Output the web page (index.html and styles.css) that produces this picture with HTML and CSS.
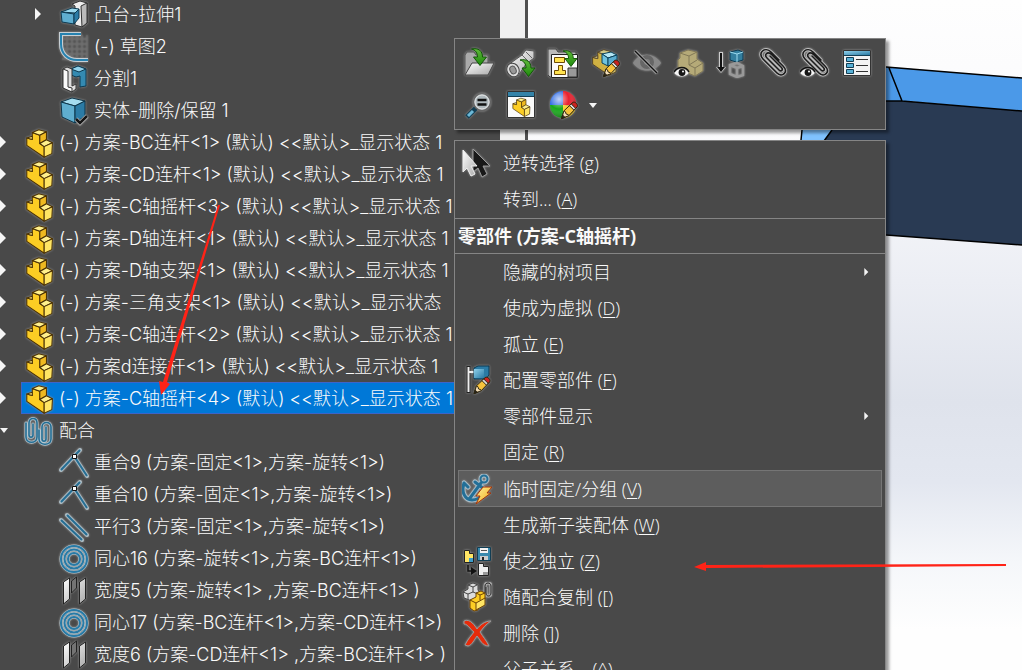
FILE: index.html
```
<!DOCTYPE html>
<html lang="zh-CN">
<head>
  <meta charset="UTF-8" />
  <title>方案</title>
  <meta name="viewport" content="width=device-width, initial-scale=1.0" />
  <link rel="stylesheet" href="styles.css">
</head>

<body>
  <!-- icon sheet -->
  <svg class="sheet" aria-hidden="true">
    <defs>
      <linearGradient id="blue" x1="0" y1="0" x2="1" y2="1">
        <stop offset="0" stop-color="#8fd0ea" /><stop offset="1" stop-color="#2b7ba5" />
      </linearGradient>
      <linearGradient id="grey" x1="0" y1="0" x2="1" y2="1">
        <stop offset="0" stop-color="#ffffff" /><stop offset="1" stop-color="#a8a8a8" />
      </linearGradient>
      <linearGradient id="green" x1="0" y1="0" x2="0" y2="1">
        <stop offset="0" stop-color="#5fb93a" /><stop offset="1" stop-color="#1e8a0c" />
      </linearGradient>
      <linearGradient id="gold" x1="0" y1="0" x2="1" y2="1">
        <stop offset="0" stop-color="#fff09a" /><stop offset="1" stop-color="#efaa14" />
      </linearGradient>
      <radialGradient id="shine" cx="0.35" cy="0.3" r="0.75">
        <stop offset="0" stop-color="#fff" stop-opacity="0.7" /><stop offset="0.5" stop-color="#fff" stop-opacity="0" /><stop offset="1" stop-color="#000" stop-opacity="0.4" />
      </radialGradient>
    </defs>

    <symbol id="right" viewBox="0 0 8 12"><path d="M0 0v12l6-6z" fill="#f5f5f5" /></symbol>
    <symbol id="down" viewBox="0 0 8 12"><path d="M0 4h8l-4 5z" fill="#f5f5f5" /></symbol>

    <symbol id="part" viewBox="1 0 29 29">
      <g stroke="#4b3205" stroke-width="1" stroke-linejoin="round">
        <path d="M9 4.300 16.300 7v8L20.500 18v10.300L3.700 16.800V9.700L9 11z" fill="#fccd24" />
        <path d="M9 4.300 15.300 1.700l7.400 2L16.300 7z" fill="#fff08c" />
        <path d="M16.300 7l6.400-3.300v7.600l-6.400 3.700z" fill="#efb920" />
        <path d="M16.300 15l6.400-3.700 5.800 2.900L20.500 18z" fill="#fff08c" />
        <path d="M20.500 18l8-3.800-.6 10.600-7.400 3.500z" fill="#ffe564" />
        <path d="M3.700 9.700 9 7.900V11z" fill="#fff08c" />
      </g>
    </symbol>
    <symbol id="pencil" viewBox="0 0 30 30">
      <g stroke="#2c2410" stroke-width="1" stroke-linejoin="round">
        <path d="M13 28.500l2.500-8 9-8.500 4.500 4.500-8.500 9z" fill="#f7c23c" />
        <path d="M13 28.500l2.500-8 1.500 1 .7 2.300 2.300.7.500 1z" fill="#f4deb8" />
        <path d="M13 28.500l1.200-3.500 2.400 2.300z" fill="#222" />
        <path d="M22.500 14l2-2c2-2 6.500 2.500 4.500 4.500l-2 2z" fill="#cb2420" />
        <path d="M21.200 15.200l1.800-1.800 4.500 4.500-1.800 1.800z" fill="#ddd" />
      </g>
    </symbol>
    <symbol id="eye" viewBox="0 0 16 12">
      <path d="M0 7C3 1 12 1 15 7c-4 5-11 5-15 0z" fill="#f5f5f5" stroke="#777" stroke-width=".5" />
      <path d="M0 6C4 0 12 0 15 6" fill="none" stroke="#111" stroke-width="1.500" />
      <circle cx="8" cy="6.500" r="3.400" fill="#161616" /><circle cx="9" cy="5.500" r="1" fill="#fff" />
    </symbol>
    <symbol id="arrow" viewBox="0 0 16 18">
      <path d="M0 1c7-1.500 11 2 11 8h4l-6.500 8.500L2 9h4C6 5 4 2 0 1z" fill="url(#green)" stroke="#125408" stroke-linejoin="round" />
    </symbol>
    <symbol id="clip" viewBox="0 0 30 30">
      <g fill="none" stroke-linecap="round">
        <path d="M12 8l11 11c3 3 0 5-2 3L9 10C6 7 9 3 13 6l12 12c6 6-1 12-6 7L5 11C-1 5 7-2 13 4l8 8" stroke="#bdbdbd" stroke-width="3.200" />
        <path d="M12 8l11 11c3 3 0 5-2 3L9 10C6 7 9 3 13 6l12 12c6 6-1 12-6 7L5 11C-1 5 7-2 13 4l8 8" stroke="#1c1c1c" stroke-width="1.600" />
      </g>
    </symbol>

    <symbol id="extrude" viewBox="0 0 30 30">
      <g stroke="#303030" stroke-linejoin="round">
        <path d="M13 4l8-3 7 2v20l-5 4-7-2V6z" fill="#eee" /><path d="M22 6l6-3v20l-5 4z" fill="#bbb" />
        <g stroke="#0c3950"><path d="M2 12l11-4 7 1-4 4z" fill="#9ad8ee" /><path d="M2 12l13 2v10L3 22z" fill="#5faed0" /><path d="M15 14l5-5v9l-5 6z" fill="#2b7ba5" /></g>
      </g>
    </symbol>
    <symbol id="sketch" viewBox="0 0 30 30">
      <path d="M8 3v25M13 3v25M18 3v25M23 3v25M28 3v25M3 7h25M3 12h25M3 17h25M3 22h25M3 27h25" fill="none" stroke="#6c6c6c" />
      <path d="M22 2H2v10c0 10 7 16 16 16h11" fill="none" stroke="#c8d0d5" stroke-width="4" />
      <path d="M22 2H2v10c0 10 7 16 16 16h11" fill="none" stroke="#2682b0" stroke-width="2" />
    </symbol>
    <symbol id="split" viewBox="0 0 30 30">
      <g stroke="#333" stroke-linejoin="round">
        <path d="M12 5l7-3 8 3v17l-6 1V12l-4 1-5-2z" fill="#348ab1" stroke="#0c3950" /><path d="M12 5l7-3 8 3-7 3z" fill="#92d2eb" stroke="#0c3950" />
        <path d="M4 5l4-2 5 2v17l4-2v5l-4 3-9-4z" fill="#ddd" /><path d="M4 5l5 2v16l4 1v4l-9-4z" fill="#fafafa" />
      </g>
    </symbol>
    <symbol id="keep" viewBox="0 0 30 30">
      <g stroke="#0d3448" stroke-linejoin="round">
        <path d="M2 6l11-4 13 3-10 5z" fill="#a4dcef" /><path d="M2 6l14 4v17L3 21z" fill="#5faecf" /><path d="M16 10l10-5v15l-10 7z" fill="#2b7ba5" />
      </g>
      <path d="M17 23l4 4 7-7" fill="none" stroke="#bbb" stroke-width="4" /><path d="M17 23l4 4 7-7" fill="none" stroke="#151515" stroke-width="2.500" />
    </symbol>
    <symbol id="mates" viewBox="0 0 30 30">
      <g fill="none" stroke-linecap="round">
        <path d="M9 8v11c0 3-4 3-4 0V7c0-6 8-6 8 0v14c0 7-11 7-11 0V7m20 4v12c0 3-4 3-4 0V11c0-6 9-6 9 0v12c0 7-12 7-12 0v-9" stroke="#b6c7d0" stroke-width="3" />
        <path d="M9 8v11c0 3-4 3-4 0V7c0-6 8-6 8 0v14c0 7-11 7-11 0V7m20 4v12c0 3-4 3-4 0V11c0-6 9-6 9 0v12c0 7-12 7-12 0v-9" stroke="#236d93" stroke-width="1.600" />
      </g>
    </symbol>
    <symbol id="coincident" viewBox="0 0 30 30">
      <path d="M2 22L21 2M15 8l13 20" stroke="#a9b9c1" stroke-width="4" stroke-linecap="round" /><path d="M2 22L21 2M15 8l13 20" stroke="#256e94" stroke-width="2" />
      <path d="M13.500 6.500h4v4h-4z" fill="#fff" stroke="#111" />
    </symbol>
    <symbol id="parallel" viewBox="0 0 30 30">
      <path d="M2 8l21 20M8 3l20 20" stroke="#a9b9c1" stroke-width="4" stroke-linecap="round" /><path d="M2 8l21 20M8 3l20 20" stroke="#256e94" stroke-width="2" />
    </symbol>
    <symbol id="concentric" viewBox="0 0 30 30">
      <g fill="none"><g stroke="#b8c9d1" stroke-width="3"><circle cx="15" cy="15" r="13" /><circle cx="15" cy="15" r="9.500" /><circle cx="15" cy="15" r="6" /></g>
      <g stroke="#287aa6" stroke-width="2"><circle cx="15" cy="15" r="13" /><circle cx="15" cy="15" r="9.500" /><circle cx="15" cy="15" r="6" /></g></g>
    </symbol>
    <symbol id="width" viewBox="0 0 30 30">
      <g stroke="#222"><path d="M4.500 6l6-4v21l-6 5zM20.500 6l6-4v21l-6 5z" fill="url(#grey)" /><path d="M12.500 5l5-4v11l-5 5z" fill="#737373" /></g>
    </symbol>

    <symbol id="open" viewBox="0 0 30 30">
      <path d="M1 26V7l2-3h7l2 3h12v8" fill="#aaa" stroke="#555" /><path d="M1 27l7-12h22l-6 12z" fill="url(#grey)" stroke="#444" />
      <use href="#arrow" x="7" width="17" height="18" />
    </symbol>
    <symbol id="preview" viewBox="0 0 30 30">
      <path d="M2 17L16 7l4-5 8 1v7l-8 6-8 12z" fill="url(#grey)" stroke="#555" /><ellipse cx="7" cy="22" rx="6" ry="7" transform="rotate(-25 7 22)" fill="#ddd" stroke="#444" /><ellipse cx="7" cy="22" rx="3" ry="4" transform="rotate(-25 7 22)" fill="#999" stroke="#555" />
      <path d="M16 7l6 6M20 4l6 6" stroke="#666" /><use href="#arrow" x="14" y="11" width="16" height="18" />
    </symbol>
    <symbol id="drawing" viewBox="0 0 30 30">
      <path d="M0 27V1h8l2 3h18v25H2z" fill="#bbb" stroke="#444" /><path d="M3.500 6.500h26v23h-26z" fill="#fafafa" stroke="#222" />
      <path d="M6.500 9.500h10v5h-10zM10.500 17.500h4v5h3v4h-11v-4h4z" fill="#ffe24e" stroke="#6d4a05" /><path d="M20 20h9v9h-9z" fill="#999" stroke="#333" /><use href="#arrow" x="15" y="1" width="15" height="19" />
    </symbol>
    <symbol id="edit" viewBox="0 0 30 30">
      <g opacity=".65"><use href="#part" width="28" height="28" /></g>
      <g stroke="#0b435d" stroke-linejoin="round"><path d="M12 6l9-2 6 3-9 3z" fill="#b5e7f5" /><path d="M12 6l6 4v8l-6-3z" fill="#6fc3df" /><path d="M18 10l9-3v9l-9 2z" fill="#59acd0" /></g><use href="#pencil" x="1" y="1" width="29" height="29" />
    </symbol>
    <symbol id="hide" viewBox="0 0 30 30">
      <path d="M1 15C7 4 22 4 29 15c-7 10-21 10-28 0z" fill="#888" /><circle cx="15" cy="14" r="7" fill="#666" /><circle cx="15" cy="14" r="3" fill="#808080" /><path d="M3 3l22 22" stroke="#aaa" stroke-width="3" /><path d="M3 3l22 22" stroke="#111" stroke-width="1.500" />
    </symbol>
    <symbol id="transparent" viewBox="0 0 30 30">
      <g stroke="#817857"><path d="M6 5l8-3 9 2v7l6 4v8l-8 5L4 21V12l2-2z" fill="#b5aa78" /><path d="M6 5l9 3v9l6 3v8M15 8l8-4M21 20l8-5M15 17l8-5" fill="none" /></g><use href="#eye" x="0" y="18" width="16" height="12" />
    </symbol>
    <symbol id="suppress" viewBox="0 0 30 30">
      <path d="M5 4v18" stroke="#ccc" stroke-width="4" /><path d="M0 19h10l-5 6z" fill="#ccc" /><path d="M5 5v16" stroke="#111" stroke-width="2" /><path d="M1 19h8l-4 5z" fill="#111" />
      <path d="M14 4l8-2 5 2v8l-7 2-6-2z" fill="#347f9f" stroke="#0c3950" /><path d="M14 4l7 2v8M21 6l6-2" fill="none" stroke="#9ddcf0" />
      <path d="M14 17l7-2 6 3v9l-6 2-7-3zM14 17l7 3 6-2M21 20v9" fill="none" stroke="#999" stroke-width="2.500" />
    </symbol>
    <symbol id="clipeye" viewBox="0 0 30 30"><use href="#clip" width="30" height="30" /><use href="#eye" x="0" y="18" width="16" height="12" /></symbol>
    <symbol id="props" viewBox="0 0 30 30">
      <path d="M1.500 2.500h27v25h-27z" fill="#f3f3f3" stroke="#333" /><path d="M2 3h26v4H2z" fill="url(#blue)" /><path d="M2 7.500h26" stroke="#123e54" />
      <path d="M4.500 9.500h7v4h-7zM4.500 15.500h7v4h-7zM4.500 21.500h7v4h-7z" fill="#58b1d7" stroke="#123e54" /><path d="M14 11.500h12M14 17.500h12M14 23.500h12" stroke="#333" />
    </symbol>
    <symbol id="magnify" viewBox="0 0 30 30">
      <path d="M3 27l9-9" stroke="#123e54" stroke-width="5" /><path d="M4 26l5-5" stroke="#6db9d8" stroke-width="3" /><circle cx="18" cy="12" r="8.500" fill="#aeb8bc" stroke="#666" stroke-width="1.500" /><circle cx="18" cy="12" r="7" fill="none" stroke="#e5e5e5" />
      <path d="M13.500 10h9M13.500 14.500h9" stroke="#111" stroke-width="2.500" />
    </symbol>
    <symbol id="window" viewBox="0 0 30 30">
      <path d="M1.500 1.500h27v26h-27z" fill="#fafafa" stroke="#333" /><path d="M2 2h26v4H2z" fill="#3483a8" /><path d="M2 6.500h26" stroke="#123e54" /><use href="#part" x="5" y="7" width="20" height="20" />
    </symbol>
    <symbol id="appearance" viewBox="0 0 30 30">
      <path d="M15 15V1A13 13 0 0 0 2 15z" fill="#356fe2" /><path d="M15 15V1a13 13 0 0 1 13 15z" fill="#e9202e" /><path d="M15 15H2a13 13 0 0 0 13 13z" fill="#18a91a" /><path d="M15 15v13a13 13 0 0 0 13-12z" fill="#f7d430" /><circle cx="15" cy="14.500" r="13" fill="url(#shine)" /><use href="#pencil" x="1" y="1" width="29" height="29" />
    </symbol>

    <symbol id="invert" viewBox="0 0 30 30">
      <path d="M11 1l17 17h-7l4 8-5 3-4-9-5 4z" fill="#191919" stroke="#999" stroke-linejoin="round" /><path d="M1 2l14 16H9l4 8-4 2-4-8-4 4z" fill="url(#grey)" stroke="#eee" />
    </symbol>
    <symbol id="config" viewBox="0 0 30 30">
      <path d="M6.500 1v27" stroke="#222" stroke-width="4" /><path d="M6.500 2v25M7 7h6" stroke="#eee" stroke-width="2" /><path d="M12 3l4-2h11v9l-3 4H12z" fill="#2b7ba5" stroke="#0c3950" /><path d="M12 4h10v9H12z" fill="url(#blue)" /><use href="#pencil" x="-1" y="1" width="30" height="29" />
    </symbol>
    <symbol id="anchor" viewBox="0 0 30 30">
      <g fill="none" stroke-linecap="round">
        <path d="M19 9L8 24M13 8l9 7M2 9c-3 9 1 17 8 17 5 0 9-3 12-6M2 9l-1 5m1-5l4 4" stroke="#a9bdc8" stroke-width="5" /><circle cx="22" cy="5" r="3.500" stroke="#a9bdc8" stroke-width="4" />
        <path d="M19 9L8 24M13 8l9 7M2 9c-3 9 1 17 8 17 5 0 9-3 12-6M2 9l-1 5m1-5l4 4" stroke="#236f97" stroke-width="3" /><circle cx="22" cy="5" r="3.500" stroke="#236f97" stroke-width="2" />
      </g>
      <path d="M21 13h9l-5 6h4L14 30l4-8h-4z" fill="url(#gold)" stroke="#a33308" />
    </symbol>
    <symbol id="independent" viewBox="0 0 30 30">
      <path d="M2.500 4.500h5v3h4v9h-9z" fill="#ffe564" stroke="#222" /><path d="M7 12h4v4H7z" fill="#3c9bc8" />
      <path d="M15.500 1.500h13v13h-13z" fill="#3989ad" stroke="#123e54" /><path d="M18 2h8v5h-8z" fill="#f3f3f3" /><path d="M19 4.500h6" stroke="#555" /><path d="M18 10h8v4h-8z" fill="#ccc" /><path d="M20 11h2v3h-2z" fill="#222" />
      <path d="M16.500 17.500h5v3h5v9h-10z" fill="#eee" stroke="#222" /><path d="M21 26h5v3h-5z" fill="#999" /><path d="M6 19v6h4" fill="none" stroke="#111" stroke-width="1.500" /><path d="M9 21l6 4-6 4z" fill="#111" />
    </symbol>
    <symbol id="copymates" viewBox="0 0 30 30">
      <g stroke="#444"><path d="M1 10l5-3V3l5-2 5 2v5l2 3v4l-8 4-8-3z" fill="#ddd" /><path d="M1 10l5 2 5-2 5 2M6 3l5 2 4-2M11 5v5M6 12v5" fill="none" /></g>
      <path d="M23 11V4c0-4 6-4 6 0v7c0 4-5 4-5 0V5" fill="none" stroke="#aaa" stroke-width="3" /><path d="M23 11V4c0-4 6-4 6 0v7c0 4-5 4-5 0V5" fill="none" stroke="#222" />
      <path d="M8 18l6-3v-4l5-2 4 2v6l-7 4v7l-4 1-4-3z" fill="#fccd24" stroke="#6d4305" /><path d="M14 21l9-5v7l-9 5z" fill="#ffe564" stroke="#6d4305" /><path d="M8 18l6 3M14 11l4 2 5-2M18 13v5" fill="none" stroke="#6d4305" />
    </symbol>
    <symbol id="delete" viewBox="0 0 30 30">
      <path d="M2 3c6-3 11 5 13 8 3-4 8-8 14-8-5 3-8 7-11 11 3 5 6 8 9 14-7 0-9-7-12-10-3 4-5 9-9 10l-3-1c3-6 6-9 9-13C8 11 6 6 2 6z" fill="#e72b0b" stroke="#999" />
    </symbol>
  </svg>

  <div class="app">
    <nav class="tree-panel">
      <ul class="tree">
        <li class="node child"><button class="toggle" aria-label="展开"><svg><use href="#right" /></svg></button><span class="label"><svg class="icon"><use href="#extrude" /></svg>凸台-拉伸1</span></li>
        <li class="node child"><span class="toggle"></span><span class="label"><svg class="icon"><use href="#sketch" /></svg>(-) 草图2</span></li>
        <li class="node child"><span class="toggle"></span><span class="label"><svg class="icon"><use href="#split" /></svg>分割1</span></li>
        <li class="node child"><span class="toggle"></span><span class="label"><svg class="icon"><use href="#keep" /></svg>实体-删除/保留 1</span></li>
        <li class="node"><button class="toggle" aria-label="展开"><svg><use href="#right" /></svg></button><span class="label"><svg class="icon"><use href="#part" /></svg>(-) 方案-BC连杆&lt;1&gt; (默认) &lt;&lt;默认&gt;_显示状态 1</span></li>
        <li class="node"><button class="toggle" aria-label="展开"><svg><use href="#right" /></svg></button><span class="label"><svg class="icon"><use href="#part" /></svg>(-) 方案-CD连杆&lt;1&gt; (默认) &lt;&lt;默认&gt;_显示状态 1</span></li>
        <li class="node"><button class="toggle" aria-label="展开"><svg><use href="#right" /></svg></button><span class="label"><svg class="icon"><use href="#part" /></svg>(-) 方案-C轴摇杆&lt;3&gt; (默认) &lt;&lt;默认&gt;_显示状态 1</span></li>
        <li class="node"><button class="toggle" aria-label="展开"><svg><use href="#right" /></svg></button><span class="label"><svg class="icon"><use href="#part" /></svg>(-) 方案-D轴连杆&lt;1&gt; (默认) &lt;&lt;默认&gt;_显示状态 1</span></li>
        <li class="node"><button class="toggle" aria-label="展开"><svg><use href="#right" /></svg></button><span class="label"><svg class="icon"><use href="#part" /></svg>(-) 方案-D轴支架&lt;1&gt; (默认) &lt;&lt;默认&gt;_显示状态 1</span></li>
        <li class="node"><button class="toggle" aria-label="展开"><svg><use href="#right" /></svg></button><span class="label"><svg class="icon"><use href="#part" /></svg>(-) 方案-三角支架&lt;1&gt; (默认) &lt;&lt;默认&gt;_显示状态</span></li>
        <li class="node"><button class="toggle" aria-label="展开"><svg><use href="#right" /></svg></button><span class="label"><svg class="icon"><use href="#part" /></svg>(-) 方案-C轴连杆&lt;2&gt; (默认) &lt;&lt;默认&gt;_显示状态 1</span></li>
        <li class="node"><button class="toggle" aria-label="展开"><svg><use href="#right" /></svg></button><span class="label"><svg class="icon"><use href="#part" /></svg>(-) 方案d连接杆&lt;1&gt; (默认) &lt;&lt;默认&gt;_显示状态 1</span></li>
        <li class="node selected"><button class="toggle" aria-label="展开"><svg><use href="#right" /></svg></button><span class="label"><svg class="icon"><use href="#part" /></svg>(-) 方案-C轴摇杆&lt;4&gt; (默认) &lt;&lt;默认&gt;_显示状态 1</span></li>
        <li class="node"><button class="toggle" aria-label="折叠"><svg><use href="#down" /></svg></button><span class="label"><svg class="icon"><use href="#mates" /></svg>配合</span></li>
        <li class="node child"><span class="toggle"></span><span class="label"><svg class="icon"><use href="#coincident" /></svg>重合9 (方案-固定&lt;1&gt;,方案-旋转&lt;1&gt;)</span></li>
        <li class="node child"><span class="toggle"></span><span class="label"><svg class="icon"><use href="#coincident" /></svg>重合10 (方案-固定&lt;1&gt;,方案-旋转&lt;1&gt;)</span></li>
        <li class="node child"><span class="toggle"></span><span class="label"><svg class="icon"><use href="#parallel" /></svg>平行3 (方案-固定&lt;1&gt;,方案-旋转&lt;1&gt;)</span></li>
        <li class="node child"><span class="toggle"></span><span class="label"><svg class="icon"><use href="#concentric" /></svg>同心16 (方案-旋转&lt;1&gt;,方案-BC连杆&lt;1&gt;)</span></li>
        <li class="node child"><span class="toggle"></span><span class="label"><svg class="icon"><use href="#width" /></svg>宽度5 (方案-旋转&lt;1&gt; ,方案-BC连杆&lt;1&gt; )</span></li>
        <li class="node child"><span class="toggle"></span><span class="label"><svg class="icon"><use href="#concentric" /></svg>同心17 (方案-BC连杆&lt;1&gt;,方案-CD连杆&lt;1&gt;)</span></li>
        <li class="node child"><span class="toggle"></span><span class="label"><svg class="icon"><use href="#width" /></svg>宽度6 (方案-CD连杆&lt;1&gt; ,方案-BC连杆&lt;1&gt; )</span></li>
      </ul>
    </nav>
    <div class="splitter"></div>
    <main class="scene">
      <svg class="model" viewBox="0 0 494 300" aria-hidden="true">
        <path d="M273 140l1-10 16-70 71 7 133 11v33l-116-10z" fill="#4b99e8" />
        <path d="M273 140l1-12h32l-10 14z" fill="#80c2ff" />
        <path d="M296 141l8-11 24-29h46l120 10v134l-136-10-70-5z" fill="#293a53" />
        <path d="M358 67l136 11M328 101h46l120 10M361 68l13 33M358 235l136 10M304 130l-8 11M274 130l-1 10" fill="none" stroke="#000" stroke-width="1.500" />
      </svg>
    </main>
  </div>

  <div class="popup toolbar" role="toolbar">
    <button class="tool" aria-label="打开零件"><svg class="icon"><use href="#open" /></svg></button>
    <button class="tool" aria-label="预览窗口"><svg class="icon"><use href="#preview" /></svg></button>
    <button class="tool" aria-label="打开工程图"><svg class="icon"><use href="#drawing" /></svg></button>
    <button class="tool" aria-label="编辑零件"><svg class="icon"><use href="#edit" /></svg></button>
    <button class="tool" aria-label="隐藏零部件"><svg class="icon"><use href="#hide" /></svg></button>
    <button class="tool" aria-label="更改透明度"><svg class="icon"><use href="#transparent" /></svg></button>
    <button class="tool" aria-label="压缩"><svg class="icon"><use href="#suppress" /></svg></button>
    <button class="tool" aria-label="配合"><svg class="icon"><use href="#clip" /></svg></button>
    <button class="tool" aria-label="查看配合"><svg class="icon"><use href="#clipeye" /></svg></button>
    <button class="tool" aria-label="零部件属性"><svg class="icon"><use href="#props" /></svg></button>
    <button class="tool" aria-label="放大所选范围"><svg class="icon"><use href="#magnify" /></svg></button>
    <button class="tool" aria-label="零部件预览"><svg class="icon"><use href="#window" /></svg></button>
    <button class="tool" aria-label="外观"><svg class="icon"><use href="#appearance" /></svg></button>
    <button class="more" aria-label="更多外观"><svg><use href="#down" /></svg></button>
  </div>

  <div class="popup menu" role="menu">
    <div class="group first">
      <button class="item" role="menuitem"><span class="slot"><svg class="icon"><use href="#invert" /></svg></span>逆转选择 (<u>g</u>)</button>
      <button class="item" role="menuitem"><span class="slot"></span>转到... (<u>A</u>)</button>
    </div>
    <h2 class="heading">零部件 (方案-C轴摇杆)</h2>
    <div class="group">
      <button class="item" role="menuitem"><span class="slot"></span>隐藏的树项目<svg class="caret"><use href="#right" /></svg></button>
      <button class="item" role="menuitem"><span class="slot"></span>使成为虚拟 (<u>D</u>)</button>
      <button class="item" role="menuitem"><span class="slot"></span>孤立 (<u>E</u>)</button>
      <button class="item" role="menuitem"><span class="slot"><svg class="icon"><use href="#config" /></svg></span>配置零部件 (<u>F</u>)</button>
      <button class="item" role="menuitem"><span class="slot"></span>零部件显示<svg class="caret"><use href="#right" /></svg></button>
      <button class="item" role="menuitem"><span class="slot"></span>固定 (<u>R</u>)</button>
      <button class="item active" role="menuitem"><span class="slot"><svg class="icon"><use href="#anchor" /></svg></span>临时固定/分组 (<u>V</u>)</button>
      <button class="item" role="menuitem"><span class="slot"></span>生成新子装配体 (<u>W</u>)</button>
      <button class="item" role="menuitem"><span class="slot"><svg class="icon"><use href="#independent" /></svg></span>使之独立 (<u>Z</u>)</button>
      <button class="item" role="menuitem"><span class="slot"><svg class="icon"><use href="#copymates" /></svg></span>随配合复制 (<u>[</u>)</button>
      <button class="item" role="menuitem"><span class="slot"><svg class="icon"><use href="#delete" /></svg></span>删除 (<u>]</u>)</button>
      <button class="item" role="menuitem"><span class="slot"></span>父子关系... (<u>^</u>)</button>
    </div>
  </div>

  <!-- red pointer arrows -->
  <svg class="marks" width="1022" height="670" aria-hidden="true">
    <path d="M218 205h2l-53 177 3 2-9 11-2-14 4 1zM1006 564v2l-300 2v3l-12-4 12-5v3z" fill="#ff2317" />
  </svg>
</body>
</html>
```
FILE: styles.css
```
* {
  box-sizing: border-box;
}

body {
  margin: 0;
  height: 100vh;
  position: relative;
  overflow: hidden;
  font-family: "Open Sans", "Noto Sans CJK SC", sans-serif;
  font-size: 18px;
  font-weight: 300;
  line-height: 24px;
  color: #fafafa;
}

button {
  display: flex;
  align-items: center;
  margin: 0;
  padding: 0;
  border: none;
  background: none;
  color: inherit;
  font: inherit;
}

.sheet {
  position: absolute;
  width: 0;
  height: 0;
}

.icon {
  flex: none;
  width: 30px;
  height: 30px;
  filter: drop-shadow(0 0 1px #999);
}

.app {
  display: flex;
  height: 100%;
}

/* feature tree */
.tree-panel {
  flex: 0 0 500px;
  overflow: hidden;
  background: #494949;
  font-family: Inter, "Noto Sans CJK SC", sans-serif;
}

.tree {
  margin: -2px 0 0;
  padding: 0;
  list-style: none;
}

.node {
  display: flex;
  height: 32px;
  white-space: nowrap;
}

.child {
  padding-left: 35px;
}

.toggle {
  flex: 0 0 21px;
}

.toggle svg,
.more svg {
  width: 8px;
  height: 12px;
}

.label {
  flex: 1;
  display: flex;
  align-items: center;
  gap: 5px;
  padding: 2px 0 0 2px;
  border: 1px solid transparent;
}

.selected .label {
  background: #0078d7;
  border-color: #3d64c8;
}

.splitter {
  flex: 0 0 28px;
  background: #f0f0f0;
  border-right: 3px solid #505050;
}

/* graphics area */
.scene {
  flex: 1;
  overflow: hidden;
  background: linear-gradient(#fefefe 0%, #fafafc 20%, #eceef4 42%, #dfe3ec 60%, #e3e7f0 72%, #f5f7fa 84%, #fefefe 94%);
}

.model {
  display: block;
  width: 494px;
  height: 300px;
}

/* floating panels */
.popup {
  position: absolute;
  left: 454px;
  width: 432px;
  background: #494949;
  border: 1px solid #858585;
  box-shadow: 3px 3px 3px rgba(0, 0, 0, 0.4);
}

.toolbar {
  top: 38px;
  display: flex;
  flex-wrap: wrap;
  padding: 3px;
}

.tool {
  justify-content: center;
  width: 42px;
  height: 42px;
}

.more {
  padding-left: 5px;
}

.menu {
  top: 140px;
}

.group {
  padding: 0 3px;
}

.first {
  padding-top: 4px;
  padding-bottom: 1px;
}

.item {
  width: 100%;
  height: 36px;
  border: 1px solid transparent;
  white-space: pre;
}

.active {
  height: 37px;
  background: #5d5d5d;
  border-color: #757575;
}

.slot {
  flex: 0 0 44px;
  display: flex;
  padding-left: 3px;
}

.caret {
  width: 6px;
  height: 8px;
  margin-left: auto;
  margin-right: 11px;
}

.heading {
  margin: 0;
  padding: 5px 3px;
  border: solid #858585;
  border-width: 1px 0;
  font-size: 18px;
  font-weight: bold;
}

u {
  text-underline-offset: 2px;
}

.marks {
  position: absolute;
  top: 0;
  left: 0;
  pointer-events: none;
}
```
